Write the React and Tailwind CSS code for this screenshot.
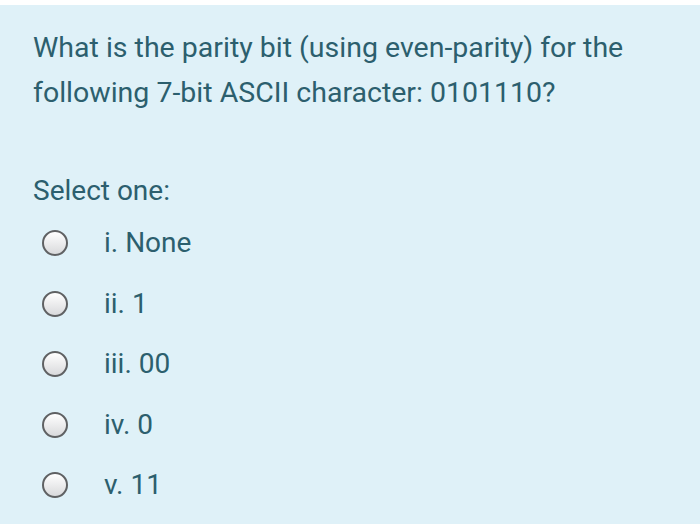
import React from "react";

const options = ["i. None", "ii. 1", "iii. 00", "iv. 0", "v. 11"];

const Radio = () => (
  <span className="w-[26px] h-[26px] rounded-full border-2 border-[#5f6163] bg-gradient-to-b from-white to-[#d9dadc] shrink-0" />
);

const App = () => {
  return (
    <div
      className="w-[700px] h-[524px] bg-white pt-[5px] overflow-hidden"
      style={{ fontFamily: "Roboto, 'Liberation Sans', sans-serif" }}
    >
      <div className="h-full bg-[#dff1f8] text-[#2c5f6e] pl-[33px] pt-[20px]">
        {/* Question */}
        <p className="text-[28.5px] leading-[45px] pr-[40px]">
          What is the parity bit (using even-parity) for the following 7-bit
          ASCII character: 0101110?
        </p>

        {/* Answers */}
        <div className="mt-[59px]">
          <p className="text-[28px] leading-[34px]">Select one:</p>
          <div className="mt-[22px] flex flex-col gap-[34.5px]">
            {options.map((opt, index) => (
              <label key={index} className="flex items-center h-[26px]">
                <span className="w-[35px] flex justify-end">
                  <Radio />
                </span>
                <span className="ml-[36px] text-[28px]">{opt}</span>
              </label>
            ))}
          </div>
        </div>
      </div>
    </div>
  );
};

export default App;
